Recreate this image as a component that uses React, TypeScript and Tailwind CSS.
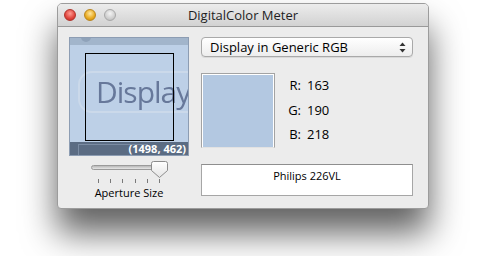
const font = { fontFamily: '"Lucida Grande", "Open Sans", sans-serif' };

function TrafficLight({ color, ring }: { color: string; ring: string }) {
  return (
    <span
      className={`block h-[12px] w-[12px] rounded-full border ${ring} ${color}`}
    />
  );
}

function Loupe() {
  return (
    <div className="relative h-[119px] w-[120px] overflow-hidden border border-[#8d9db3] bg-[#bdd0e7]">
      <div className="h-[7px] bg-[#a2b5cb]" />
      <div className="absolute left-[11px] top-[-4px] h-[8px] w-[10px] rounded-b-full bg-[#8fa2b9]" />
      {/* magnified button edge */}
      <div className="absolute left-[8px] top-[33px] h-[42px] w-[140px] rounded-l-[14px] border-2 border-[#cbd9ea]" />
      <span
        className="absolute left-[26px] top-[34px] whitespace-nowrap text-[30px] font-medium leading-[40px] tracking-[-1px] text-[#67789a] blur-[0.5px]"
        style={font}
      >
        Display
      </span>
      <div className="absolute left-[15px] top-[15px] h-[88px] w-[89px] border border-black" />
      <div className="absolute bottom-0 left-0 right-0 flex h-[13px] items-center justify-end bg-[#5b6c83] pr-[2px]">
        <div className="absolute left-[8px] top-[2px] h-[11px] w-[70px] border-l border-t border-[#7b8ca3]" />
        <span className="relative text-[11px] font-bold leading-none text-white" style={font}>
          (1498, 462)
        </span>
      </div>
    </div>
  );
}

function Slider() {
  return (
    <div className="mx-auto mt-[5px] w-[76px]">
      <div className="relative h-[17px]">
        <div className="absolute left-0 right-[4px] top-[4px] h-[5px] rounded-full border border-[#9a9a9a] bg-gradient-to-b from-[#b8b8b8] to-[#e6e6e6]" />
        <svg className="absolute left-[60px] top-0" width="17" height="17" viewBox="0 0 17 17">
          <defs>
            <linearGradient id="knob" x1="0" y1="0" x2="0" y2="1">
              <stop offset="0" stopColor="#ffffff" />
              <stop offset="1" stopColor="#e4e4e4" />
            </linearGradient>
          </defs>
          <path
            d="M2.5 0.5 H14.5 Q16.5 0.5 16.5 2.5 V9.5 L8.5 16.5 L0.5 9.5 V2.5 Q0.5 0.5 2.5 0.5 Z"
            fill="url(#knob)"
            stroke="#8c8c8c"
          />
        </svg>
      </div>
      <div className="mt-[1px] flex justify-between px-[7px]">
        {[0, 1, 2, 3, 4, 5].map((i) => (
          <span key={i} className="block h-[4px] w-px bg-[#7a7a7a]" />
        ))}
      </div>
      <p className="mt-[3px] whitespace-nowrap text-center text-[11px] leading-[14px] text-black" style={font}>
        Aperture Size
      </p>
    </div>
  );
}

function PopupButton() {
  return (
    <div className="flex h-[20px] items-center justify-between rounded-[4px] border border-[#a9a9a9] bg-gradient-to-b from-white to-[#ededed] pl-[8px] pr-[6px] shadow-[0_1px_0_rgba(0,0,0,0.08)]">
      <span className="text-[13px] leading-none text-black" style={font}>
        Display in Generic RGB
      </span>
      <svg width="7" height="11" viewBox="0 0 7 11">
        <path d="M3.5 0.5 L6.5 4 H0.5 Z" fill="#333" />
        <path d="M3.5 10.5 L6.5 7 H0.5 Z" fill="#333" />
      </svg>
    </div>
  );
}

const channels = [
  { label: "R:", value: 163 },
  { label: "G:", value: 190 },
  { label: "B:", value: 218 },
];

export default function App() {
  return (
    <div className="h-[256px] w-[486px] overflow-hidden bg-white pl-[57px] pt-[3px]" style={font}>
      <div className="flex h-[206px] w-[372px] flex-col overflow-hidden rounded-t-[5px] rounded-b-[4px] border border-[#9c9c9c] bg-[#ececec] shadow-[0_24px_34px_rgba(0,0,0,0.62)]">
        {/* title bar */}
        <div className="relative flex h-[23px] shrink-0 items-center border-b border-[#999999] bg-gradient-to-b from-[#ececec] to-[#d2d2d2] pl-[6px]">
          <div className="flex gap-[8px]">
            <TrafficLight color="bg-[radial-gradient(circle_at_50%_35%,#ff9d94,#e0443c_60%,#b8281f)]" ring="border-[#b0332b]" />
            <TrafficLight color="bg-[radial-gradient(circle_at_50%_35%,#ffe7a0,#e8a91e_60%,#c2860f)]" ring="border-[#b9851e]" />
            <TrafficLight color="bg-[radial-gradient(circle_at_50%_35%,#f4f4f4,#cfcfcf_60%,#b5b5b5)]" ring="border-[#a8a8a8]" />
          </div>
          <span className="absolute inset-x-0 text-center text-[13px] leading-none text-[#1f1f1f]">
            DigitalColor Meter
          </span>
        </div>

        {/* content */}
        <div className="flex gap-[12px] pl-[11px] pt-[10px]">
          <div className="w-[120px]">
            <Loupe />
            <Slider />
          </div>

          <div className="w-[212px]">
            <PopupButton />
            <div className="mt-[16px] flex">
              <div className="h-[75px] w-[74px] border border-[#a3a3a3] border-b-[#e2e2e2] bg-white p-px pb-0">
                <div className="h-full w-full bg-[#b3c8e1]" />
              </div>
              <div className="ml-[6px] mt-[1px] grid grid-cols-[20px_auto] gap-x-[6px] text-[13px] leading-[22.5px] text-black">
                {channels.map((c) => (
                  <div key={c.label} className="contents">
                    <span className="text-right">{c.label}</span>
                    <span>{c.value}</span>
                  </div>
                ))}
              </div>
            </div>
            <div className="mt-[16px] h-[32px] border border-[#a6a6a6] border-t-[#8e8e8e] bg-white pt-[3px] text-center text-[11px] leading-[16px] text-black">
              Philips 226VL
            </div>
          </div>
        </div>
      </div>
    </div>
  );
}
